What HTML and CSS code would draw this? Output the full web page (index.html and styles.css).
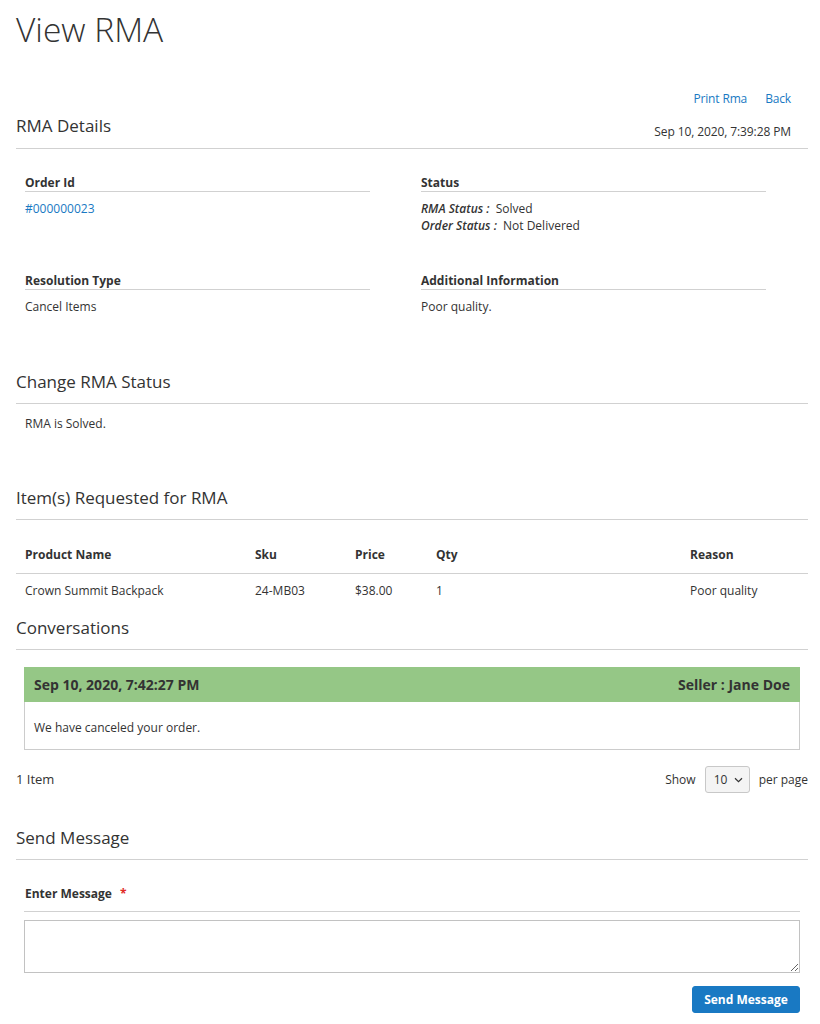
FILE: index.html
```html
<!DOCTYPE html>
<html lang="en">
<head>
<meta charset="utf-8">
<title>View RMA</title>
<link rel="stylesheet" href="styles.css">
</head>
<body>
<main class="page">
  <h1 class="page-title">View RMA</h1>

  <div class="actions">
    <a href="#" class="link">Print Rma</a>
    <a href="#" class="link">Back</a>
  </div>

  <div class="block-head with-date">
    <h2 class="block-title">RMA Details</h2>
    <span class="block-date">Sep 10, 2020, 7:39:28 PM</span>
  </div>

  <div class="details">
    <div class="detail">
      <div class="detail-label">Order Id</div>
      <div class="detail-value"><a href="#" class="link">#000000023</a></div>
    </div>
    <div class="detail">
      <div class="detail-label">Status</div>
      <div class="detail-value">
        <div><em class="status-key">RMA Status :</em> Solved</div>
        <div><em class="status-key">Order Status :</em> Not Delivered</div>
      </div>
    </div>
    <div class="detail">
      <div class="detail-label">Resolution Type</div>
      <div class="detail-value">Cancel Items</div>
    </div>
    <div class="detail">
      <div class="detail-label">Additional Information</div>
      <div class="detail-value">Poor quality.</div>
    </div>
  </div>

  <div class="block-head status-head">
    <h2 class="block-title">Change RMA Status</h2>
  </div>
  <p class="status-note">RMA is Solved.</p>

  <div class="block-head items-head">
    <h2 class="block-title">Item(s) Requested for RMA</h2>
  </div>
  <table class="items">
    <thead>
      <tr>
        <th class="col-name">Product Name</th>
        <th class="col-sku">Sku</th>
        <th class="col-price">Price</th>
        <th class="col-qty">Qty</th>
        <th class="col-reason">Reason</th>
      </tr>
    </thead>
    <tbody>
      <tr>
        <td>Crown Summit Backpack</td>
        <td>24-MB03</td>
        <td>$38.00</td>
        <td>1</td>
        <td>Poor quality</td>
      </tr>
    </tbody>
  </table>

  <div class="block-head convo-head">
    <h2 class="block-title">Conversations</h2>
  </div>
  <div class="message">
    <div class="message-head">
      <span>Sep 10, 2020, 7:42:27 PM</span>
      <span>Seller : Jane Doe</span>
    </div>
    <div class="message-body">We have canceled your order.</div>
  </div>

  <div class="toolbar">
    <span class="toolbar-amount">1 Item</span>
    <div class="limiter">
      <span>Show</span>
      <button type="button" class="limiter-select">10
        <svg width="9" height="6" viewBox="0 0 9 6" aria-hidden="true"><path d="M1 1.2l3.5 3.4L8 1.2" fill="none" stroke="#333" stroke-width="1.2"/></svg>
      </button>
      <span>per page</span>
    </div>
  </div>

  <div class="block-head send-head">
    <h2 class="block-title">Send Message</h2>
  </div>
  <form class="send-form">
    <label class="field-label" for="msg">Enter Message <span class="required">*</span></label>
    <textarea id="msg" class="field-input"></textarea>
    <div class="form-actions">
      <button type="button" class="btn-primary">Send Message</button>
    </div>
  </form>
</main>
</body>
</html>
```

FILE: styles.css
```css
* { box-sizing: border-box; }

body {
  margin: 0;
  background: #fff;
  color: #333;
  font-family: "Open Sans", "Liberation Sans", sans-serif;
  font-size: 12px;
  line-height: 17px;
}

.page {
  width: 792px;
  margin-left: 16px;
}

.link {
  color: #1979c3;
  text-decoration: none;
}

.page-title {
  margin: 9px 0 0;
  font-size: 33.5px;
  line-height: 41px;
  font-weight: 300;
}

.actions {
  display: flex;
  justify-content: flex-end;
  gap: 18px;
  margin-top: 40px;
  padding-right: 17px;
  letter-spacing: -0.15px;
}

/* section headings with a rule underneath */
.block-head {
  display: flex;
  justify-content: space-between;
  align-items: flex-end;
  border-bottom: 1px solid #d1d1d1;
  padding-bottom: 9px;
}

.block-title {
  margin: 0;
  font-size: 17px;
  line-height: 24px;
  font-weight: 400;
}

.with-date {
  margin-top: 7px;
  padding-bottom: 8px;
}
.with-date .block-title { padding-bottom: 2px; }
.block-date { padding-right: 17px; letter-spacing: -0.1px; }

.details {
  display: grid;
  grid-template-columns: 345px 345px;
  column-gap: 51px;
  row-gap: 38px;
  padding: 0 9px;
  margin-top: 25px;
}

.detail-label {
  font-weight: 700;
  border-bottom: 1px solid #d1d1d1;
}

.detail-value { margin-top: 8px; }

.status-key {
  font-weight: 600;
  margin-right: 3px;
}

.status-head { margin-top: 55px; }

.status-note {
  margin: 11px 0 0;
  padding-left: 9px;
}

.items-head { margin-top: 54px; }

.items {
  width: 100%;
  border-collapse: collapse;
  margin-top: 16px;
}

.items th {
  text-align: left;
  font-weight: 700;
  padding: 10px 9px 10px;
  border-bottom: 1px solid #d1d1d1;
}

.items td {
  padding: 8px 9px 0;
}

.col-name { width: 230px; }
.col-sku { width: 100px; }
.col-price { width: 81px; }
.col-qty { width: 254px; }

.convo-head { margin-top: 17px; }

.message {
  margin: 17px 8px 0;
  border: 1px solid #ccc;
}

.message-head {
  display: flex;
  justify-content: space-between;
  align-items: center;
  height: 35px;
  margin: -1px -1px 0;
  padding: 0 10px;
  background: #95c786;
  font-size: 14px;
  font-weight: 700;
}

.message-body {
  padding: 17px 9px 13px;
}

.toolbar {
  display: flex;
  justify-content: space-between;
  align-items: center;
  margin-top: 16px;
}

.toolbar-amount { font-size: 13px; }

.limiter {
  display: flex;
  align-items: center;
  gap: 9px;
}

.limiter-select {
  display: flex;
  align-items: center;
  gap: 7px;
  width: 45px;
  height: 27px;
  padding: 0 0 0 8px;
  background: #f4f4f4;
  border: 1px solid #c8c8c8;
  border-radius: 3px;
  font: inherit;
  color: #333;
}

.send-head { margin-top: 33px; }

.send-form {
  padding: 0 8px;
}

.field-label {
  display: block;
  margin-top: 25px;
  padding: 0 0 9px 1px;
  font-weight: 700;
  border-bottom: 1px solid #d1d1d1;
}

.required {
  color: #e02b27;
  margin-left: 5px;
}

.field-input {
  display: block;
  width: 100%;
  height: 53px;
  margin-top: 8px;
  border: 1px solid #c2c2c2;
  font: inherit;
}

.form-actions {
  display: flex;
  justify-content: flex-end;
  margin-top: 13px;
}

.btn-primary {
  height: 27px;
  width: 108px;
  background: #1979c3;
  border: 1px solid #1979c3;
  border-radius: 3px;
  color: #fff;
  font: 700 12px/1 "Open Sans", "Liberation Sans", sans-serif;
}
```
